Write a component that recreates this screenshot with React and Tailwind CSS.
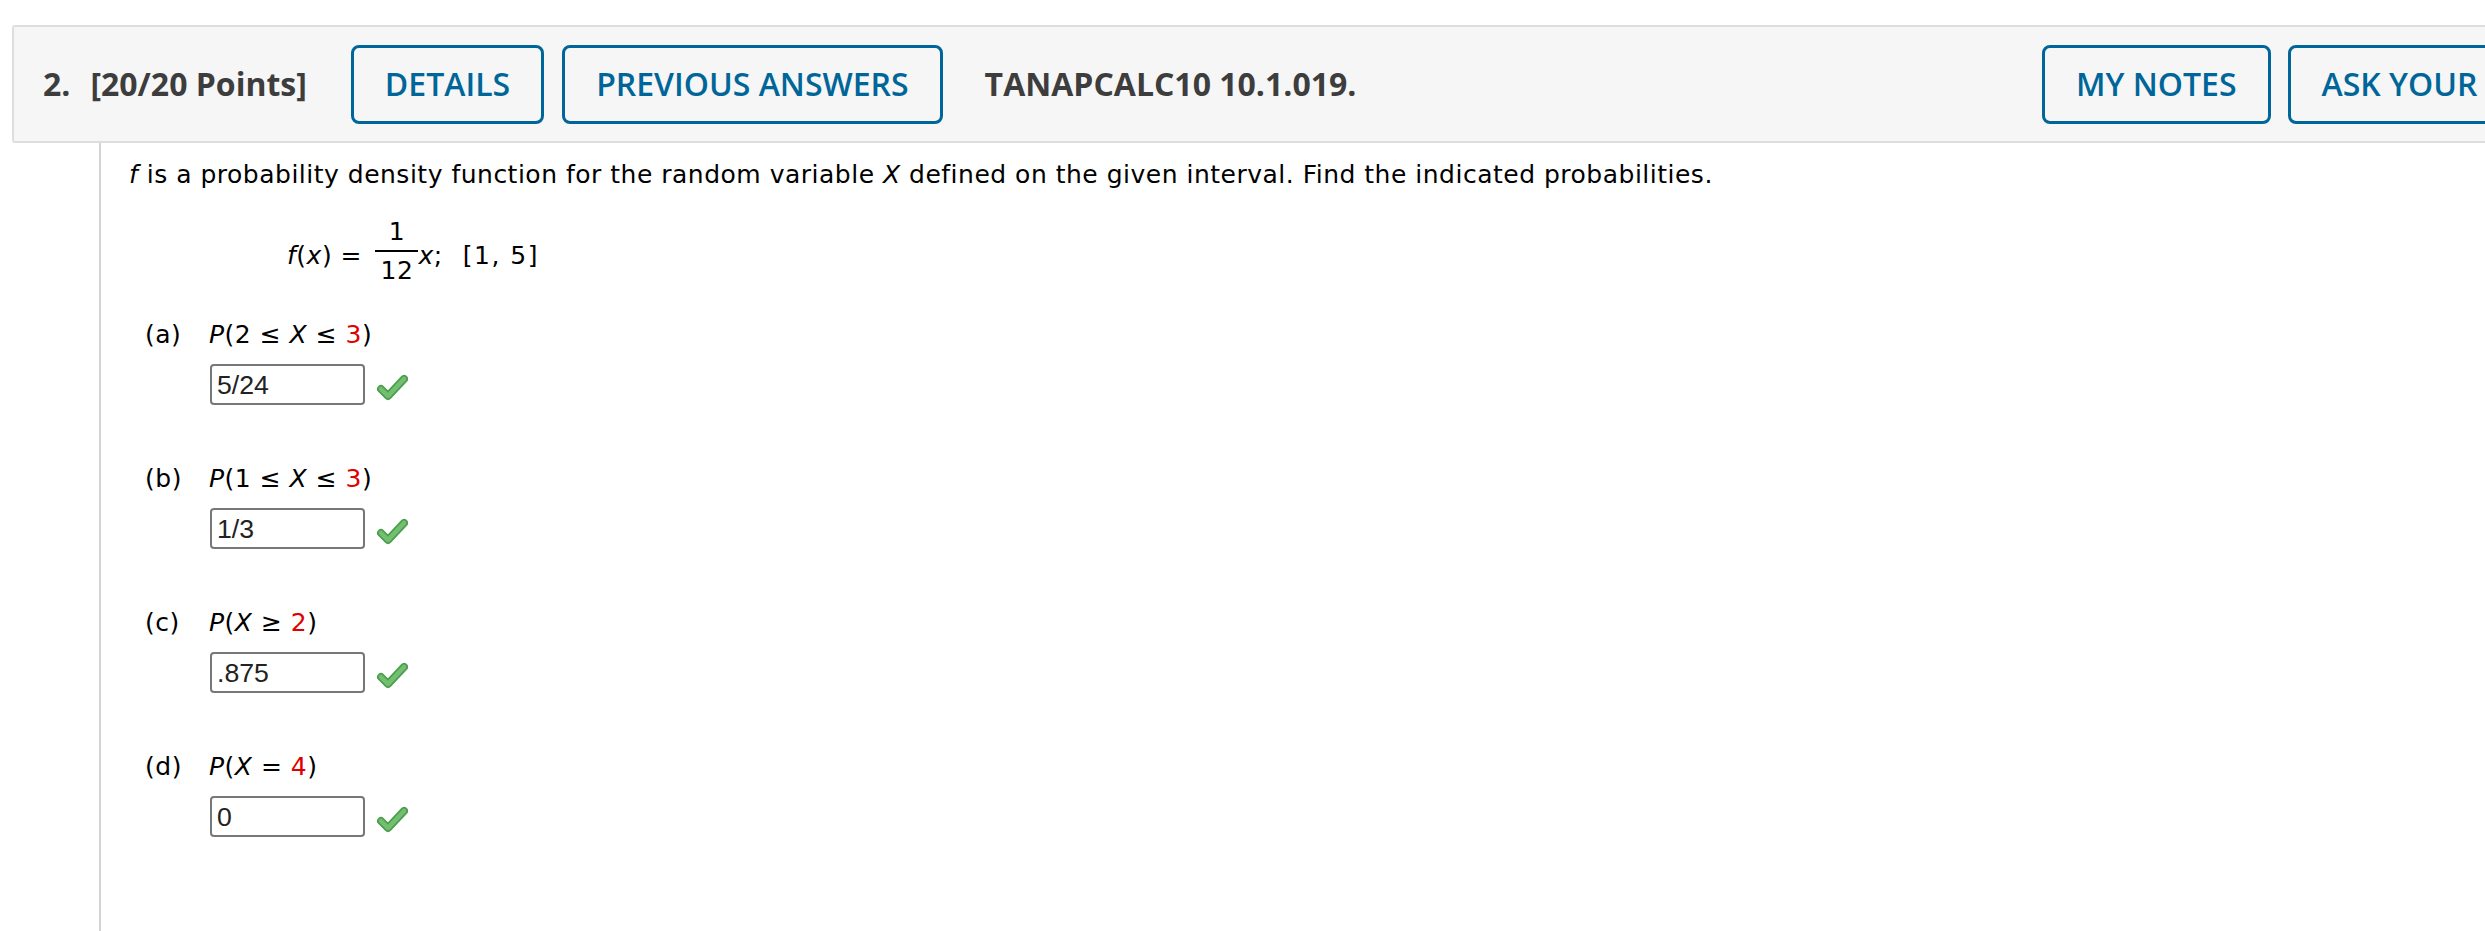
import React from 'react'

const Check = () => (
  <svg width="32" height="27" viewBox="0 0 32 27" className="shrink-0">
    <polyline points="5,15 12,22 28,5" fill="none" stroke="#4f9d4f" strokeWidth="8" strokeLinecap="round" strokeLinejoin="round" />
    <polyline points="5,15 12,22 28,5" fill="none" stroke="#70c070" strokeWidth="4.5" strokeLinecap="round" strokeLinejoin="round" />
  </svg>
)

const Btn = ({ children }) => (
  <div className="h-[79px] flex items-center px-[31px] border-[3px] border-[#006699] rounded-[8px] text-[#006699] font-semibold text-[32px] whitespace-nowrap shrink-0">
    {children}
  </div>
)

const Red = ({ children }) => <span className="text-[#e00000]">{children}</span>

function Part({ tag, expr, value }) {
  return (
    <div className="flex ml-[16px] mb-[56px]">
      <span className="w-[64px] shrink-0 leading-[36px]">({tag})</span>
      <div className="flex flex-col">
        <div className="leading-[36px] whitespace-pre">{expr}</div>
        <div className="flex items-center gap-[11px] mt-[11px] ml-[1px] tracking-normal">
          <div className="w-[155px] h-[41px] border-2 border-[#777] rounded-[4px] flex items-center pl-[5px] font-['Liberation_Sans',Arial,sans-serif] text-[26.67px] text-[#222]">
            {value}
          </div>
          <div className="mt-[6px]"><Check /></div>
        </div>
      </div>
    </div>
  )
}

export default function App() {
  return (
    <div className="h-[931px] overflow-hidden bg-white flex flex-col">
      <div className="pt-[25px] pl-3">
        <div className="h-[118px] w-max flex items-center bg-[#f6f6f6] border-2 border-[#dedede] rounded-[3px] pl-[29px] pr-[40px] font-['Open_Sans',sans-serif]">
          <div className="w-[1999px] shrink-0 flex items-center">
            <span className="font-bold text-[32px] text-[#3d3d3d] mr-[20px]">2.</span>
            <span className="font-bold text-[32px] text-[#3d3d3d] mr-[44px]">[20/20 Points]</span>
            <Btn>DETAILS</Btn>
            <div className="w-[18px]" />
            <Btn>PREVIOUS ANSWERS</Btn>
            <span className="font-bold text-[32px] text-[#3d3d3d] ml-[42px]">TANAPCALC10 10.1.019.</span>
          </div>
          <div className="flex items-center gap-[17px]">
            <Btn>MY NOTES</Btn>
            <Btn>ASK YOUR TEACHER</Btn>
          </div>
        </div>
      </div>
      <div className="flex-1 ml-[99px] border-l-2 border-[#d4d4d4] pl-[28px] pt-[14px] font-['DejaVu_Sans',Verdana,sans-serif] text-[25px] tracking-[0.5px] text-black">
        <p className="leading-[36px]">
          <i>f</i> is a probability density function for the random variable <i>X</i> defined on the given interval. Find the indicated probabilities.
        </p>
        <div className="flex items-center ml-[158px] mt-[34px] mb-[34px] leading-none">
          <span className="whitespace-pre"><i>f</i>(<i>x</i>) = </span>
          <span className="inline-flex flex-col items-center -mt-[8px] ml-[5px]">
            <span className="pb-[6px]">1</span>
            <span className="w-[43px] h-[2px] bg-black" />
            <span className="pt-[6px]">12</span>
          </span>
          <span><i>x</i>;</span>
          <span className="ml-[20px] tracking-[1.5px]">[1, 5]</span>
        </div>
        <Part tag="a" value="5/24" expr={<><i>P</i>(2 ≤ <i>X</i> ≤ <Red>3</Red>)</>} />
        <Part tag="b" value="1/3" expr={<><i>P</i>(1 ≤ <i>X</i> ≤ <Red>3</Red>)</>} />
        <Part tag="c" value=".875" expr={<><i>P</i>(<i>X</i> ≥ <Red>2</Red>)</>} />
        <Part tag="d" value="0" expr={<><i>P</i>(<i>X</i> = <Red>4</Red>)</>} />
      </div>
    </div>
  )
}
